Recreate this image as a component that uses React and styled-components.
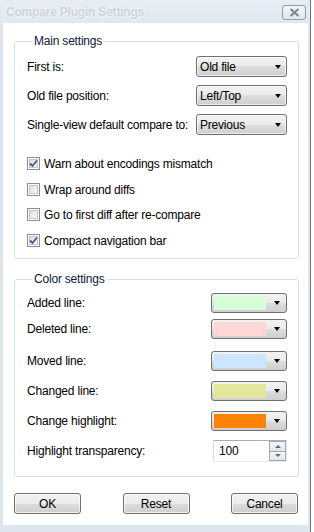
import React from 'react';
import styled, { createGlobalStyle } from 'styled-components';

const GlobalStyle = createGlobalStyle`
  html, body {
    margin: 0;
    padding: 0;
    background: #ffffff;
  }
  body {
    font-family: "Liberation Sans", Arial, sans-serif;
    font-size: 12px;
    letter-spacing: -0.2px;
    color: #000;
  }
`;

const Window = styled.div`
  width: 311px;
  height: 532px;
  box-sizing: border-box;
  background: linear-gradient(#e6edf5, #dbe4ee 40px, #dde6ef);
  border-right: 1px solid #6b7785;
  display: flex;
  flex-direction: column;
`;

const TitleBar = styled.div`
  height: 23px;
  display: flex;
  align-items: center;
  justify-content: space-between;
  padding: 0 4px 0 6px;
  box-sizing: border-box;
`;

const Title = styled.span`
  font-weight: bold;
  font-size: 12px;
  color: #d0d4da;
  text-shadow: 0 0 4px #ffffff;
`;

const CloseButton = styled.div`
  width: 22px;
  height: 13px;
  margin-top: 1px;
  border: 1px solid #8f9cab;
  border-radius: 3px;
  background: linear-gradient(#f4f7fa, #dfe6ee);
  display: flex;
  align-items: center;
  justify-content: center;
`;

const Client = styled.div`
  margin: 0 0 0 3px;
  width: 305px;
  height: 502px;
  background: #ffffff;
  box-sizing: border-box;
  padding: 11px 9px 0 11px;
  display: flex;
  flex-direction: column;
`;

const Group = styled.fieldset`
  margin: ${({ top }) => top}px 0 0 0;
  padding: ${({ pad }) => pad};
  border: 1px solid #d5dfe5;
  border-radius: 3px;
  min-width: 0;
  display: flex;
  flex-direction: column;
`;

const Legend = styled.legend`
  padding: 0 2px;
  margin-left: 5px;
  line-height: 14px;
  color: #0b1b36;
`;

const Row = styled.div`
  display: flex;
  align-items: center;
  justify-content: space-between;
  height: ${({ h }) => h || 21}px;
  margin-top: ${({ gap }) => gap || 0}px;
`;

const Label = styled.span`
  color: #000;
`;

const Combo = styled.div`
  width: 81px;
  height: 19px;
  border: 1px solid #707070;
  border-radius: 3px;
  background: linear-gradient(#f2f2f2 0%, #ebebeb 50%, #dddddd 50%, #cfcfcf 100%);
  box-shadow: inset 0 0 0 1px rgba(255, 255, 255, 0.6);
  display: flex;
  align-items: center;
  justify-content: space-between;
  padding: 0 5px 0 3px;
  box-sizing: content-box;
`;

const ComboText = styled.span`
  color: #000;
`;

const Arrow = styled.span`
  width: 0;
  height: 0;
  border-left: 3.5px solid transparent;
  border-right: 3.5px solid transparent;
  border-top: 4px solid #000;
`;

const ColorCombo = styled.div`
  width: 67px;
  height: 18px;
  border: 1px solid #707070;
  border-radius: 3px;
  background: linear-gradient(#f2f2f2 0%, #ebebeb 50%, #dddddd 50%, #cfcfcf 100%);
  display: flex;
  align-items: center;
  padding: 0 5px 0 2px;
  box-sizing: content-box;
`;

const Swatch = styled.span`
  width: 52px;
  height: 14px;
  background: ${({ color }) => color};
  margin-right: 8px;
`;

const Spin = styled.div`
  width: 74px;
  height: 22px;
  box-sizing: border-box;
  border: 1px solid #e3e9ef;
  border-top-color: #abadb3;
  border-left-color: #dbdfe6;
  background: #fff;
  display: flex;
  align-items: stretch;
`;

const SpinValue = styled.span`
  flex: 1;
  padding-left: 5px;
  display: flex;
  align-items: center;
  color: #000;
`;

const SpinButtons = styled.div`
  width: 17px;
  display: flex;
  flex-direction: column;
`;

const SpinButton = styled.div`
  flex: 1;
  border: 1px solid #a7a7a7;
  margin-top: ${({ down }) => (down ? '-1px' : '0')};
  background: linear-gradient(#f6f8fb, #dfe5ec);
  display: flex;
  align-items: center;
  justify-content: center;
`;

const SpinTri = styled.span`
  width: 0;
  height: 0;
  border-left: 3px solid transparent;
  border-right: 3px solid transparent;
  ${({ down }) =>
    down ? 'border-top: 3px solid #4d6a9a;' : 'border-bottom: 3px solid #4d6a9a;'}
`;

const CheckRow = styled.label`
  display: flex;
  align-items: center;
  height: 13px;
  margin-top: ${({ gap }) => gap}px;
`;

const Box = styled.span`
  width: 13px;
  height: 13px;
  box-sizing: border-box;
  border: 1px solid #8e8f8f;
  background: #fff;
  margin-right: 4px;
  position: relative;
  display: flex;
  align-items: center;
  justify-content: center;
  &::before {
    content: '';
    position: absolute;
    inset: 1px;
    border: 1px solid #c6c6c6;
    background: linear-gradient(135deg, #dcdcdc, #fbfbfb);
  }
`;

const Buttons = styled.div`
  display: flex;
  justify-content: space-between;
  margin-top: 16px;
  padding-right: 1px;
`;

const Button = styled.div`
  width: 65px;
  height: 19px;
  border: 1px solid #707070;
  border-radius: 3px;
  background: linear-gradient(#f2f2f2 0%, #ebebeb 50%, #dddddd 50%, #cfcfcf 100%);
  box-shadow: inset 0 0 0 1px rgba(255, 255, 255, 0.7);
  display: flex;
  align-items: center;
  justify-content: center;
  color: #000;
`;

const CheckMark = () => (
  <svg width="9" height="9" viewBox="0 0 9 9" style={{ position: 'relative' }}>
    <path d="M1 4.5 L3.5 7 L8 1.5" fill="none" stroke="#3f5893" strokeWidth="1.8" />
  </svg>
);

const Checkbox = ({ checked, label, gap }) => (
  <CheckRow gap={gap}>
    <Box>{checked && <CheckMark />}</Box>
    <Label>{label}</Label>
  </CheckRow>
);

const colors = [
  { label: 'Added line:', color: '#d7ffd7', gap: 0 },
  { label: 'Deleted line:', color: '#ffd7d7', gap: 6 },
  { label: 'Moved line:', color: '#cde6ff', gap: 12 },
  { label: 'Changed line:', color: '#e4e79b', gap: 10 },
  { label: 'Change highlight:', color: '#ff8306', gap: 10 }
];

const App = () => (
  <>
    <GlobalStyle />
    <Window>
      <TitleBar>
        <Title>Compare Plugin Settings</Title>
        <CloseButton>
          <svg width="11" height="9" viewBox="0 0 11 9">
            <path d="M1.5 1 L9.5 8 M9.5 1 L1.5 8" stroke="#7d8793" strokeWidth="2" />
          </svg>
        </CloseButton>
      </TitleBar>
      <Client>
        <Group top={0} pad="8px 11px 11px 12px">
          <Legend>Main settings</Legend>
          <Row>
            <Label>First is:</Label>
            <Combo>
              <ComboText>Old file</ComboText>
              <Arrow />
            </Combo>
          </Row>
          <Row gap={8}>
            <Label>Old file position:</Label>
            <Combo>
              <ComboText>Left/Top</ComboText>
              <Arrow />
            </Combo>
          </Row>
          <Row gap={8}>
            <Label>Single-view default compare to:</Label>
            <Combo>
              <ComboText>Previous</ComboText>
              <Arrow />
            </Combo>
          </Row>
          <Checkbox checked gap={22} label="Warn about encodings mismatch" />
          <Checkbox gap={13} label="Wrap around diffs" />
          <Checkbox gap={12} label="Go to first diff after re-compare" />
          <Checkbox checked gap={13} label="Compact navigation bar" />
        </Group>
        <Group top={13} pad="7px 11px 14px 12px">
          <Legend>Color settings</Legend>
          {colors.map((c) => (
            <Row key={c.label} h={20} gap={c.gap}>
              <Label>{c.label}</Label>
              <ColorCombo>
                <Swatch color={c.color} />
                <Arrow />
              </ColorCombo>
            </Row>
          ))}
          <Row h={22} gap={9}>
            <Label>Highlight transparency:</Label>
            <Spin>
              <SpinValue>100</SpinValue>
              <SpinButtons>
                <SpinButton>
                  <SpinTri />
                </SpinButton>
                <SpinButton down>
                  <SpinTri down />
                </SpinButton>
              </SpinButtons>
            </Spin>
          </Row>
        </Group>
        <Buttons>
          <Button>OK</Button>
          <Button>Reset</Button>
          <Button>Cancel</Button>
        </Buttons>
      </Client>
    </Window>
  </>
);

export default App;
